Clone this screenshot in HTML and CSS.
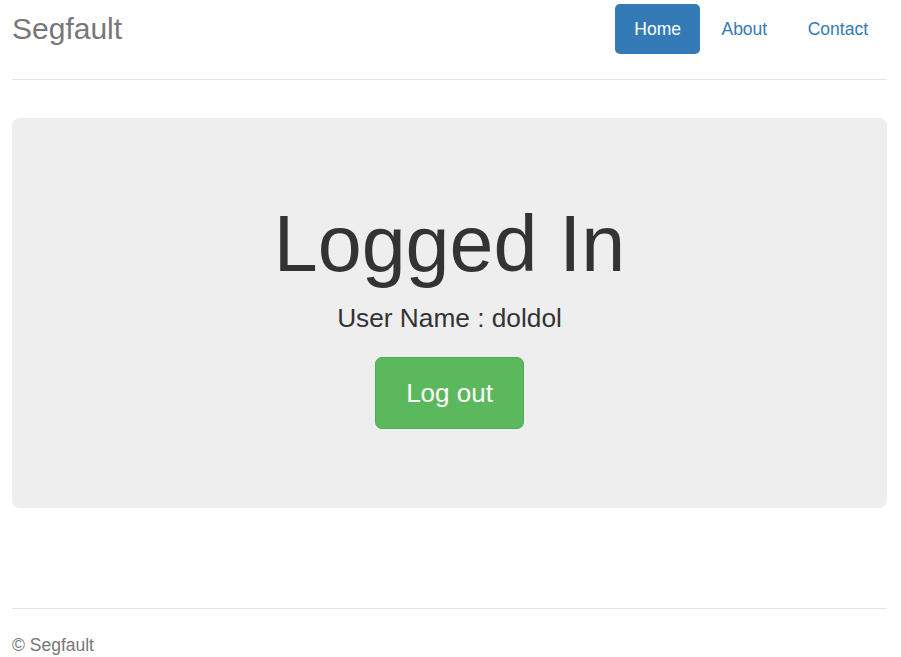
FILE: index.html
```html
<!DOCTYPE html>
<html lang="en">
<head>
  <meta charset="UTF-8" />
  <meta name="viewport" content="width=device-width, initial-scale=1.0"/>
  <title>Segfault</title>
  <link rel="stylesheet" href="styles.css">
</head>
<body>
  <div class="container">
    <div class="header">
      <h3 class="brand">Segfault</h3>
      <ul class="nav-pills">
        <li class="active"><a href="#">Home</a></li>
        <li><a href="#">About</a></li>
        <li><a href="#">Contact</a></li>
      </ul>
    </div>

    <div class="jumbotron">
      <h1>Logged In</h1>
      <p class="user-name">User Name : doldol</p>
      <p><a class="btn-logout" href="#">Log out</a></p>
    </div>

    <footer class="footer">
      <p>&copy; Segfault</p>
    </footer>
  </div>
</body>
</html>
```

FILE: styles.css
```css
html, body {
  margin: 0;
  font-family: "Liberation Sans", Arial, sans-serif;
  font-size: 17.5px;
  line-height: 1.42857;
  color: #333;
  background-color: #fff;
}

.container {
  padding: 4px 14px 0 12px;
}

/* Top bar with brand and pills */
.header {
  display: flex;
  justify-content: space-between;
  align-items: flex-start;
  padding-bottom: 25px;
  border-bottom: 1px solid #e5e5e5;
  margin-bottom: 38px;
}

.brand {
  margin: 0;
  font-size: 30px;
  font-weight: normal;
  line-height: 50px;
  color: #777;
}

.nav-pills {
  display: flex;
  list-style: none;
  margin: 0;
  padding: 0;
}

.nav-pills li {
  margin-left: 2.5px;
}

.nav-pills a {
  display: block;
  padding: 12.5px 19px;
  line-height: 25px;
  color: #337ab7;
  text-decoration: none;
  border-radius: 5px;
}

.nav-pills .active a {
  background-color: #337ab7;
  color: #fff;
}

/* Main grey panel */
.jumbotron {
  background-color: #eee;
  border-radius: 7.5px;
  padding: 60px 20px;
  text-align: center;
  margin-bottom: 100px;
}

.jumbotron h1 {
  margin: 23px 0 12.5px;
  font-size: 79px;
  font-weight: normal;
  line-height: 1.1;
}

.jumbotron p {
  margin: 0 0 18.75px;
  font-size: 26.25px;
  line-height: 37.5px;
}

.jumbotron p:last-child {
  margin-bottom: 19px;
}

.btn-logout {
  display: inline-block;
  vertical-align: top;
  padding: 17px 30px;
  font-size: 26px;
  line-height: 36px;
  color: #fff;
  text-decoration: none;
  background-color: #5cb85c;
  border: 1px solid #4cae4c;
  border-radius: 7px;
}

.footer {
  border-top: 1px solid #e5e5e5;
  padding-top: 24px;
  color: #777;
}

.footer p {
  margin: 0;
  line-height: 25px;
}
```
